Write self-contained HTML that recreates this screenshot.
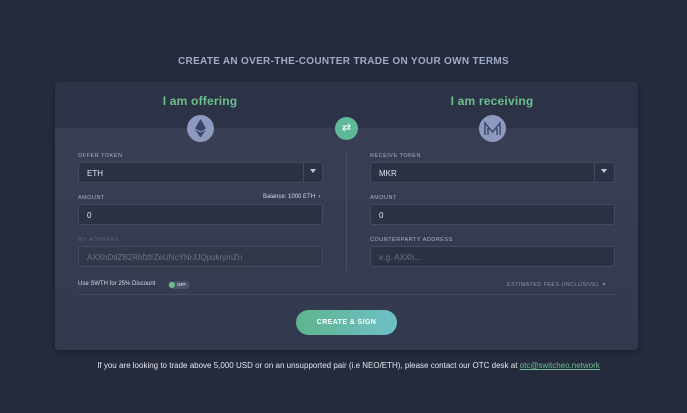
<!DOCTYPE html><html><head><style>
body{margin:0;width:687px;height:413px;background:#252b3c;font-family:"Liberation Sans",sans-serif;position:relative;overflow:hidden}
.a{position:absolute}
.t{left:0;width:687px;top:56px;text-align:center;color:#9fabc8;font-size:10px;font-weight:bold;letter-spacing:.3px}
.card{left:55px;top:82px;width:583px;height:268px;border-radius:4px;background:linear-gradient(#393f54,#343a4e);box-shadow:0 2px 6px rgba(0,0,0,.3);overflow:hidden}
.band{left:0;top:0;width:583px;height:46px;background:#2d3346}
.h{color:#6cbf8e;font-size:12px;font-weight:bold;letter-spacing:.2px;text-align:center;width:160px}
.lbl{font-size:5.5px;color:#aab2c8;letter-spacing:.5px}
.in{height:21px;border:1px solid #444b60;background:#2c3244;border-radius:3px;color:#dfe3ee;font-size:8px;line-height:21px;padding-left:8px;box-sizing:border-box}
.circ{border-radius:50%}
</style></head><body>
<div class="a t">CREATE AN OVER-THE-COUNTER TRADE ON YOUR OWN TERMS</div>
<div class="a card">
<div class="a band"></div>
</div>
<div class="a h" style="left:120px;top:94px">I am offering</div>
<div class="a h" style="left:412px;top:94px">I am receiving</div>
<div class="a circ" style="left:187px;top:115px;width:27px;height:27px;background:#8e99bf"></div>
<svg class="a" style="left:193px;top:117px" width="15" height="23" viewBox="0 0 15 23"><path d="M7.5 2L2 11.5 7.5 14.5 13 11.5Z" fill="#3a4466"/><path d="M7.5 15.8L2 12.8 7.5 20.5 13 12.8Z" fill="#3a4466"/></svg>
<div class="a circ" style="left:479px;top:115px;width:27px;height:27px;background:#8e99bf"></div>
<svg class="a" style="left:483px;top:120px" width="19" height="17" viewBox="0 0 19 17"><path d="M2 15V3L9.5 12 17 3V15M5 15V8M14 15V8" stroke="#3a4466" stroke-width="1.4" fill="none"/></svg>
<div class="a circ" style="left:335px;top:117px;width:23px;height:23px;background:#5fb999"></div>
<div class="a" style="left:335px;top:117px;width:23px;height:23px;color:#fff;font-size:11px;text-align:center;line-height:23px">⇄</div>
<div class="a" style="left:346px;top:152px;width:1px;height:118px;background:#4a5166"></div>

<div class="a lbl" style="left:78px;top:153px">OFFER TOKEN</div>
<div class="a in" style="left:78px;top:162px;width:245px">ETH</div>
<div class="a" style="left:303px;top:163px;width:1px;height:19px;background:#444b60"></div>
<div class="a" style="left:310px;top:169px;border:3px solid transparent;border-top:4px solid #bfc5d6"></div>
<div class="a lbl" style="left:78px;top:195px">AMOUNT</div>
<div class="a" style="left:263px;top:194px;font-size:6px;color:#d7dbe6">Balance: 1000 ETH &nbsp;›</div>
<div class="a in" style="left:78px;top:204px;width:245px">0</div>
<div class="a lbl" style="left:78px;top:237px;color:#5c6479">MY ADDRESS</div>
<div class="a in" style="left:78px;top:246px;width:245px;color:#6b7388;background:#323848">AXXhDdZB2RhfzfrZeUNcYNrJJQpukrymZn</div>

<div class="a lbl" style="left:370px;top:153px">RECEIVE TOKEN</div>
<div class="a in" style="left:370px;top:162px;width:245px">MKR</div>
<div class="a" style="left:594px;top:163px;width:1px;height:19px;background:#444b60"></div>
<div class="a" style="left:601px;top:169px;border:3px solid transparent;border-top:4px solid #bfc5d6"></div>
<div class="a lbl" style="left:370px;top:195px">AMOUNT</div>
<div class="a in" style="left:370px;top:204px;width:245px">0</div>
<div class="a lbl" style="left:370px;top:237px">COUNTERPARTY ADDRESS</div>
<div class="a in" style="left:370px;top:246px;width:245px;color:#6b7388">e.g. AXXh...</div>

<div class="a" style="left:78px;top:281px;font-size:6px;color:#d7dbe6">Use SWTH for 25% Discount</div>
<div class="a" style="left:168px;top:281px;width:22px;height:8px;border-radius:4px;background:#4a5166"></div>
<div class="a circ" style="left:169px;top:282px;width:6px;height:6px;background:#6cbf8e"></div>
<div class="a" style="left:177px;top:282px;font-size:4.5px;color:#cfd4e0;font-weight:bold">OFF</div>
<div class="a" style="left:507px;top:282px;font-size:5.5px;color:#8c94aa;letter-spacing:.4px">ESTIMATED FEES (INCLUSIVE) &nbsp;▾</div>
<div class="a" style="left:78px;top:294px;width:537px;height:1px;background:#464d62"></div>
<div class="a" style="left:296px;top:310px;width:101px;height:25px;border-radius:13px;background:linear-gradient(90deg,#5eb48c,#6fc0c8);color:#fff;font-size:7px;font-weight:bold;text-align:center;line-height:25px;letter-spacing:.4px">CREATE &amp; SIGN</div>
<div class="a" style="left:0;width:697px;top:361px;text-align:center;font-size:8px;color:#e4e7ef">If you are looking to trade above 5,000 USD or on an unsupported pair (i.e NEO/ETH), please contact our OTC desk at <span style="color:#6cbf8e;text-decoration:underline">otc@switcheo.network</span></div>
</body></html>
